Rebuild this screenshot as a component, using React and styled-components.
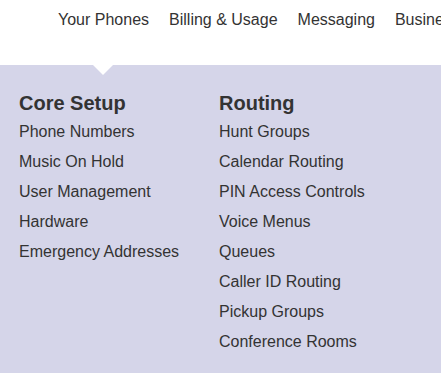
import React from 'react'
import styled, { createGlobalStyle } from 'styled-components'

const GlobalStyle = createGlobalStyle`
    body {
        margin: 0;
        background: #fff;
        font-family: "Liberation Sans", Arial, sans-serif;
        color: #333;
    }
`

const Page = styled.div`
    width: 441px;
    height: 373px;
    overflow: hidden;
    display: flex;
    flex-direction: column;
`

const NavBar = styled.nav`
    height: 65px;
    display: flex;
    gap: 20px;
    padding: 10px 0 0 58px;
    box-sizing: border-box;
    white-space: nowrap;
`

const NavItem = styled.span`
    font-size: 16px;
    line-height: 19px;
    color: #333;
`

const Panel = styled.div`
    position: relative;
    flex: 1;
    background: #d5d5e9;
    display: grid;
    grid-template-columns: 200px 200px;
    padding: 27px 0 0 19px;
    box-sizing: border-box;
    /* little notch under the active tab */
    &::before {
        content: '';
        position: absolute;
        top: 0;
        left: ${props => props.notch}px;
        border-left: 10px solid transparent;
        border-right: 10px solid transparent;
        border-top: 10px solid #fff;
    }
`

const Column = styled.div`
    display: flex;
    flex-direction: column;
`

const Heading = styled.h3`
    margin: 0 0 2px 0;
    font-size: 20px;
    line-height: 23px;
    font-weight: bold;
    color: #333;
`

const Link = styled.a`
    font-size: 16px;
    line-height: 30px;
    color: #333;
    text-decoration: none;
`

const nav = ['Your Phones', 'Billing & Usage', 'Messaging', 'Business']

const columns = [
    {
        title: 'Core Setup',
        links: ['Phone Numbers', 'Music On Hold', 'User Management', 'Hardware', 'Emergency Addresses'],
    },
    {
        title: 'Routing',
        links: ['Hunt Groups', 'Calendar Routing', 'PIN Access Controls', 'Voice Menus', 'Queues', 'Caller ID Routing', 'Pickup Groups', 'Conference Rooms'],
    },
]

const App = () => {
    return (
        <>
            <GlobalStyle />
            <Page>
                <NavBar>
                    {nav.map(n => <NavItem key={n}>{n}</NavItem>)}
                </NavBar>
                <Panel notch={93}>
                    {columns.map(col => (
                        <Column key={col.title}>
                            <Heading>{col.title}</Heading>
                            {col.links.map(l => <Link key={l} href="#">{l}</Link>)}
                        </Column>
                    ))}
                </Panel>
            </Page>
        </>
    )
}

export default App
